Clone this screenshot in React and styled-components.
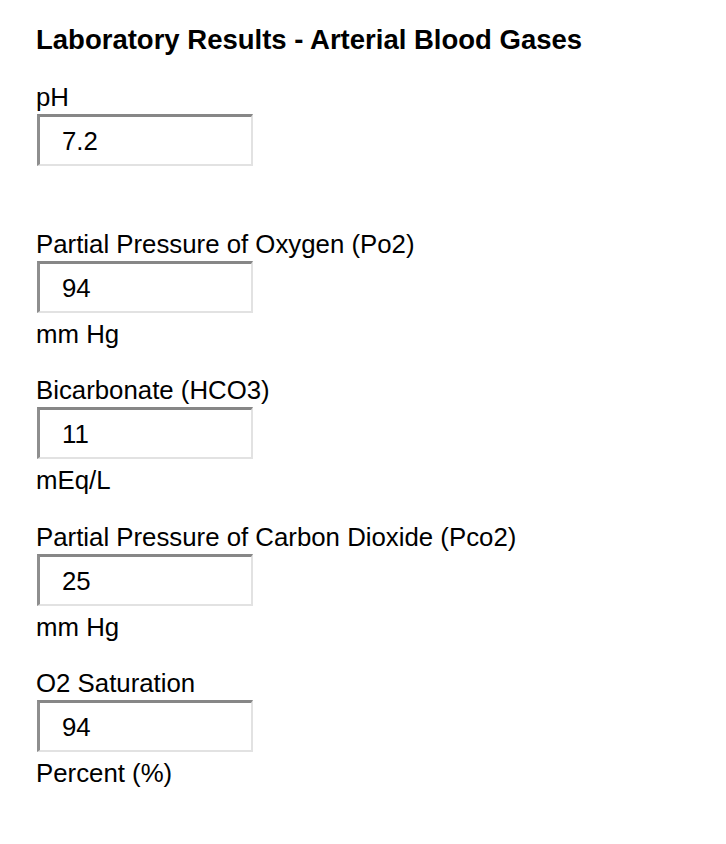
import React from "react";
import styled, { createGlobalStyle } from "styled-components";

const Global = createGlobalStyle`
  html, body { margin: 0; padding: 0; background: #fff; }
  body { font-family: "Liberation Sans", Arial, sans-serif; color: #000; }
`;

const Page = styled.div`
  padding: 26px 0 40px 36px;
`;

const Title = styled.h1`
  margin: 0 0 31px 0;
  font-size: 27.5px;
  line-height: 28px;
  font-weight: bold;
`;

const Section = styled.div`
  display: flex;
  flex-direction: column;
  align-items: flex-start;
  margin-bottom: 31.6px;
`;

const Label = styled.label`
  font-size: 25.8px;
  line-height: 25px;
  margin-bottom: 4px;
`;

const Field = styled.input`
  box-sizing: border-box;
  width: 216px;
  height: 52px;
  margin: 0 0 0 1px;
  padding: 2px 0 0 22px;
  font-family: "Liberation Sans", Arial, sans-serif;
  font-size: 25.8px;
  color: #000;
  background: #fff;
  border-top: 3px solid #878787;
  border-left: 3px solid #8e8e8e;
  border-right: 2px solid #e2e2e2;
  border-bottom: 2px solid #e2e2e2;
  outline: none;
`;

const Unit = styled.div`
  font-size: 25.8px;
  line-height: 25px;
  min-height: 25px;
  margin-top: 9px;
`;

const rows = [
  { label: "pH", value: "7.2", unit: "" },
  { label: "Partial Pressure of Oxygen (Po2)", value: "94", unit: "mm Hg" },
  { label: "Bicarbonate (HCO3)", value: "11", unit: "mEq/L" },
  { label: "Partial Pressure of Carbon Dioxide (Pco2)", value: "25", unit: "mm Hg" },
  { label: "O2 Saturation", value: "94", unit: "Percent (%)" },
];

export default function App() {
  return (
    <>
      <Global />
      <Page>
        <Title>Laboratory Results - Arterial Blood Gases</Title>
        {rows.map((r, i) => (
          <Section key={i}>
            <Label>{r.label}</Label>
            <Field type="text" defaultValue={r.value} readOnly />
            <Unit>{r.unit}</Unit>
          </Section>
        ))}
      </Page>
    </>
  );
}
